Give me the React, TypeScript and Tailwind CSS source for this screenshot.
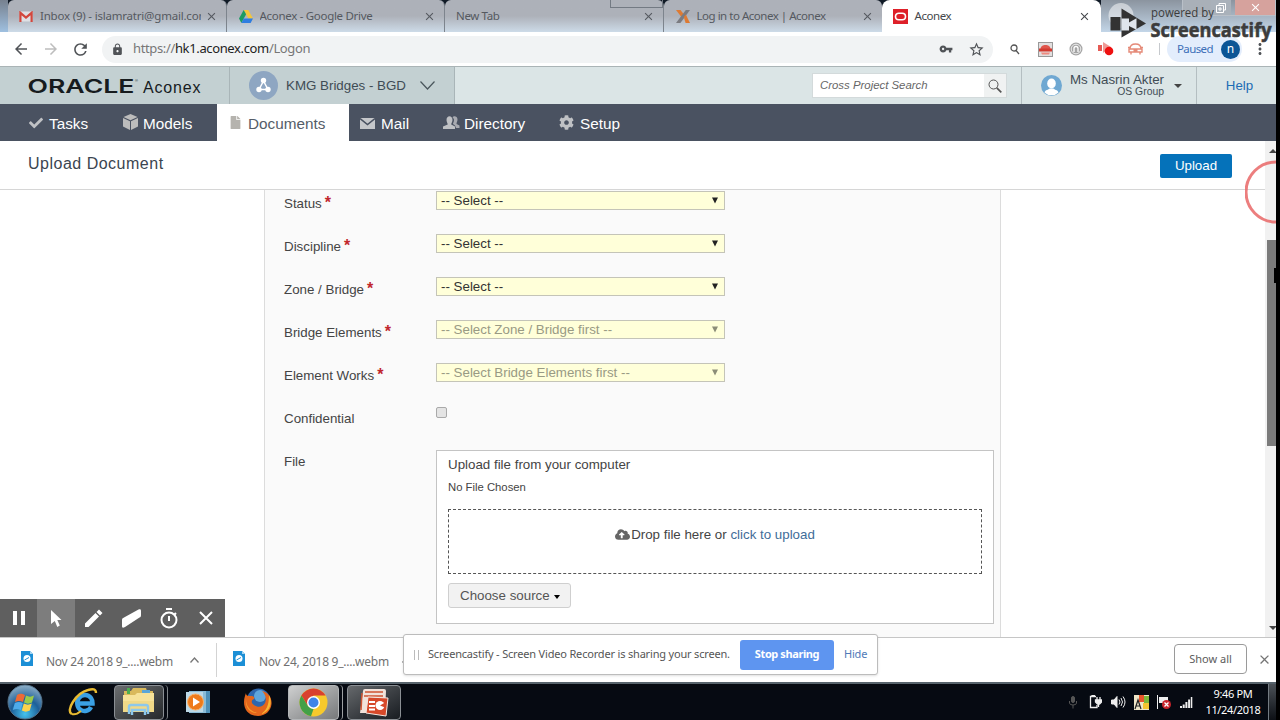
import React from "react"
import { FaCheck, FaCog, FaFile, FaCloudUploadAlt } from "react-icons/fa"
import {
  MdArrowBack,
  MdArrowForward,
  MdClose,
  MdLock,
  MdMoreVert,
  MdRefresh,
  MdStarBorder,
  MdVpnKey,
} from "react-icons/md"

const GmailIcon = () => (
  <svg width="14" height="11" viewBox="0 0 14 11">
    <path d="M0.5 0.5h13v10h-13z" fill="#dfe0e4" />
    <path d="M1.4 11V1.8L7 6.6l5.6-4.8V11" fill="none" stroke="#d2473d" strokeWidth="2.2" />
  </svg>
)

const DriveIcon = () => (
  <svg width="14" height="13" viewBox="0 0 14 13">
    <path d="M4.7 0h4.6L14 8.4H9.4z" fill="#f4c63d" />
    <path d="M4.7 0l2.4 4.2L2.4 13 0 8.4z" fill="#1d9b62" />
    <path d="M4.7 8.4H14L11.6 13H2.4z" fill="#2f7de0" />
  </svg>
)

const AconexIcon = () => (
  <svg width="14" height="13" viewBox="0 0 14 13">
    <path d="M0 0h4.5L8 4.6 5.8 7.6z" fill="#dd7a33" />
    <path d="M9.8 0H14L4.4 13H0z" fill="#7b7b80" />
    <path d="M7.8 7l2-2.6L14 13H9.6z" fill="#dd7a33" />
  </svg>
)

const OracleIcon = () => (
  <svg width="15" height="15" viewBox="0 0 15 15">
    <path d="M0 0h15v15H0z" fill="#de2029" />
    <rect x="2.5" y="4.2" width="10" height="6.6" rx="3.3" fill="none" stroke="#fff" strokeWidth="1.6" />
  </svg>
)

const tabs = [
  { title: "Inbox (9) - islamratri@gmail.com", icon: <GmailIcon />, pad: "pl-[11px]", tracking: "tracking-[-0.2px]" },
  { title: "Aconex - Google Drive", icon: <DriveIcon />, pad: "pl-[12px]", tracking: "tracking-[-0.3px]" },
  { title: "New Tab", icon: null, pad: "pl-[11px]", tracking: "tracking-[-0.35px]" },
  { title: "Log in to Aconex | Aconex", icon: <AconexIcon />, pad: "pl-[12px]", tracking: "tracking-[-0.48px]" },
]

const TabStrip = () => (
  <div className="flex h-8 shrink-0 bg-[#101a26] font-['Noto_Sans','Open_Sans',sans-serif] text-[11.5px] text-[#555960]">
    <div className="w-2 bg-linear-to-b from-[#77818f] to-[#9fc0e0]" />
    {tabs.map((tab, i) => (
      <div
        key={i}
        className={`flex items-center border-r border-[#7d848d] rounded-t-md bg-linear-to-b from-[#adb1b9] from-50% to-[#cddbe8] pr-2 ${tab.pad} ${i === 3 ? "w-[218px] border-r-0" : "w-[218.5px]"}`}
      >
        {tab.icon && <div className="mr-[7px]">{tab.icon}</div>}
        <div className={`flex-1 overflow-hidden whitespace-nowrap ${tab.tracking}`}>{tab.title}</div>
        <MdClose className="ml-1 shrink-0" size={13} />
      </div>
    ))}
    <div className="flex w-[219px] items-center rounded-t-lg bg-white pl-[11px] pr-[10px] text-[#45484c]">
      <OracleIcon />
      <div className="ml-[7px] flex-1 tracking-[-0.45px]">Aconex</div>
      <MdClose size={13} />
    </div>
    <div className="flex flex-1 items-start justify-end bg-linear-to-b from-[#8b949f] to-[#c3d6e8]">
      <div className="flex h-[16px] w-[94px] overflow-hidden rounded-bl border border-t-0 border-[#b9c0c8] text-white">
        <div className="w-[32px] border-r border-[#c3c9cf] bg-[#a9b0b8]" />
        <div className="flex w-[20px] items-start justify-center bg-[#a9b1ba] pt-[3px] -ml-[4px] mr-[4px]">
          <svg width="10" height="10" viewBox="0 0 10 10" fill="none" stroke="#fff">
            <path d="M3 2.5v-2h6.500v6.500h-2M.5 2.500h7v7h-7zM3 5h2v2H3z" />
          </svg>
        </div>
        <div className="flex flex-1 items-center justify-center bg-[#d6a29d]">
          <MdClose size={13} stroke="#fff" />
        </div>
      </div>
    </div>
  </div>
)

const Toolbar = () => (
  <div className="flex h-[34px] shrink-0 items-center bg-white font-['Noto_Sans','Open_Sans',sans-serif] text-[#505357]">
    <MdArrowBack className="ml-3" size={18} />
    <MdArrowForward className="ml-[12px] text-[#bdbdbd]" size={18} />
    <MdRefresh className="ml-[11px]" size={19} />
    <div className="ml-3 flex h-[27px] w-[891px] items-center rounded-full bg-[#f1f3f4] pl-[9px] pr-[8px]">
      <MdLock size={13} />
      <div className="ml-[9px] flex-1 text-[13px] tracking-[-0.36px] text-[#777]">
        https://<span className="text-[#222]">hk1.aconex.com</span>/Logon
      </div>
      <MdVpnKey size={14} />
      <MdStarBorder className="ml-[15px]" size={17} />
    </div>
    <svg className="ml-[17px]" width="10" height="11" viewBox="0 0 10 11" fill="none" stroke="#555" strokeWidth="1.3">
      <circle cx="4" cy="4" r="3" />
      <path d="M6 6.5l3 3.5" />
    </svg>
    <div className="ml-[18px] flex h-[15px] w-[15px] items-center justify-center border border-[#999] bg-[#e2dfdf]">
      <svg width="13" height="11" viewBox="0 0 13 11">
        <path d="M1.500 5c0-5.500 10-5.500 10 0z" fill="#e0564c" />
        <path d="M0 4.500h13v3H0z" fill="#d23a30" />
        <path d="M2 8.500h9l-1 2H3z" fill="#ef8b80" />
      </svg>
    </div>
    <svg className="ml-[16px]" width="14" height="14" viewBox="0 0 14 14">
      <circle cx="7" cy="7" r="6.5" fill="#a5a5a5" />
      <circle cx="7" cy="7" r="4.8" fill="none" stroke="#eee" />
      <path d="M5 10V6.5a2 2 0 0 1 4 0V10" fill="none" stroke="#fff" strokeWidth="1.3" />
    </svg>
    <svg className="ml-[15px]" width="17" height="14" viewBox="0 0 17 14">
      <path d="M0 3h4v6H0z" fill="#e65a54" />
      <path d="M5 0l8 5-8 6z" fill="#ef9a96" />
      <circle cx="11" cy="9" r="4.3" fill="#ee1010" />
    </svg>
    <svg className="ml-[13px]" width="15" height="12" viewBox="0 0 15 12" fill="none" stroke="#e58a78" strokeWidth="1.4">
      <path d="M2 6c0-3.500 2-5 5.500-5S13 2.500 13 6M1 6h13v3H1zM3 11.500V9.500M12 11.500V9.500M5.500 7.500h4" />
      <path d="M0 4.500h2M13 4.500h2" />
    </svg>
    <div className="ml-4 h-3 w-px bg-[#c6c9cd]" />
    <div className="ml-[7px] flex h-[26px] w-[75px] items-center justify-between rounded-full bg-[#e3edfc] pl-[10px] pr-[2px] text-[11.5px] text-[#3d6fb8]">
      <span className="tracking-[-0.6px]">Paused</span>
      <div className="flex h-[19px] w-[19px] items-center justify-center rounded-full bg-[#0b5596] pb-px text-[12px] text-white">
        n
      </div>
    </div>
    <MdMoreVert className="ml-[9px] shrink-0" size={18} />
  </div>
)

const Watermark = () => (
  <svg className="absolute left-[1106px] top-0" width="169" height="48" viewBox="0 0 169 48">
    <circle cx="15" cy="15.500" r="12.500" fill="#ffffff" opacity="0.5" />
    <path d="M4.500 17h10v13.500h-10z" fill="#333" />
    <path d="M15.500 8.500l24.500 15-24.500 14z" fill="#333" />
    <path d="M15.500 18.500h7.500v4l7.500-4.200v11.500L23 26v4.500h-7.500z" fill="#dfe5ec" />
    <g fontFamily="'Open Sans', sans-serif" fill="#3c3c3c">
      <text x="45" y="17" fontSize="13" textLength="63" lengthAdjust="spacingAndGlyphs">
        powered by
      </text>
      <text x="44.500" y="37" fontSize="20" fontWeight="700" stroke="#3c3c3c" strokeWidth="0.6" textLength="121" lengthAdjust="spacingAndGlyphs">
        Screencastify
      </text>
    </g>
  </svg>
)

const AppHeader = () => (
  <div className="flex h-[38px] shrink-0 border-t border-[#aab4b6] bg-[#dbe5e6] text-[#3f4c55]">
    <div className="flex w-[230px] border-r border-[#a9b5b8] bg-[#c3d0d2] pl-7">
      <svg width="180" height="37" viewBox="0 0 180 37" fontFamily="Liberation Sans, sans-serif" fill="#161b1e">
        <text x="-.5" y="25.500" fontSize="18.500" fontFamily="Inter, sans-serif" fontWeight="600" textLength="107" lengthAdjust="spacingAndGlyphs">
          ORACLE
        </text>
        <text x="107" y="15" fontSize="4">®</text>
        <text x="115" y="26" fontSize="16" textLength="57.500" lengthAdjust="spacing">
          Aconex
        </text>
      </svg>
    </div>
    <div className="flex w-[225px] items-center border-r border-[#a9b5b8] bg-[#c3d0d2] pl-[19px]">
      <svg width="29" height="29" viewBox="0 0 29 29">
        <circle cx="14.500" cy="14.500" r="14.500" fill="#8ea6c2" />
        <path d="M14.500 10l-4.500 8.500h9z" fill="none" stroke="#fff" strokeWidth="1.500" />
        <g fill="#fff">
          <circle cx="14.500" cy="9.500" r="2.700" />
          <circle cx="10" cy="18.500" r="2.700" />
          <circle cx="19" cy="18.500" r="2.700" />
        </g>
      </svg>
      <div className="ml-2 w-[120px] whitespace-nowrap text-[13.33px]">KMG Bridges - BGD</div>
      <svg className="ml-[14px]" width="15" height="9" viewBox="0 0 15 9" fill="none" stroke="#4a565c" strokeWidth="1.2">
        <path d="M.5 .5l7 7.500 7-7.500" />
      </svg>
    </div>
    <div className="flex flex-1 items-center justify-end pr-[14px]">
      <div className="flex h-[25px] w-[195px] items-center border border-[#d3dadb] bg-white pl-[7px] text-[11.4px] italic text-[#666]">
        <div className="flex-1">Cross Project Search</div>
        <div className="flex h-full w-[22px] items-center justify-center bg-[#f0f2f2]">
          <svg width="14" height="14" viewBox="0 0 14 14" fill="none" stroke="#555">
            <circle cx="5.500" cy="5.500" r="4.500" />
            <path d="M8.800 8.800l4.500 4.500" strokeWidth="1.700" />
          </svg>
        </div>
      </div>
    </div>
    <div className="flex w-[176px] items-center border-x border-[#b4bec1] pl-[19px]">
      <svg width="21" height="21" viewBox="0 0 21 21">
        <circle cx="10.500" cy="10.500" r="10.500" fill="#6fa8d2" />
        <ellipse cx="10.500" cy="8.500" rx="4.300" ry="5" fill="#fff" />
        <path d="M3.500 17.500c1-3 4-2.500 5-4h4c1 1.500 4 1 5 4a10 10 0 0 1-14 0z" fill="#fff" />
      </svg>
      <div className="ml-[7px] w-[95px] text-right leading-none">
        <div className="whitespace-nowrap text-[13.33px]">Ms Nasrin Akter</div>
        <div className="mt-px text-[10.4px]">OS Group</div>
      </div>
      <div className="ml-[10px] mt-px border-x-[4px] border-t-[4px] border-x-transparent border-t-[#444]" />
    </div>
    <div className="flex w-[79px] items-center justify-center pl-[6px] text-[13.33px] text-[#1d6cb5]">Help</div>
  </div>
)

const CubeIcon = () => (
  <svg width="15" height="16" viewBox="0 0 15 16" fill="#bcbcbc">
    <path d="M7.500 0L14.500 3 7.500 6.200.5 3zM0 4l7 3.200V16L0 12.600zM15 4L8 7.200V16l7-3.400z" />
  </svg>
)

const MailIcon = () => (
  <svg width="15" height="11" viewBox="0 0 15 11">
    <path d="M0 0h15v11H0z" fill="#c5c7ca" />
    <path d="M0 .5l7.500 6L15 .5" fill="none" stroke="#4a5261" strokeWidth="1.500" />
  </svg>
)

const DirectoryIcon = () => (
  <svg width="17" height="13" viewBox="0 0 17 13" fill="#bfc1c4">
    <path d="M9.500 1.500C10.500-.5 14.500 0 14.500 3.500c0 2-1 2.500-1 4.500l3 1.500V12h-3.500l-1-2.500-2-1.500c0-1.500 1-2 1-4 0-1-.5-1.800-1.500-2.500z" opacity=".8" />
    <path d="M3.500 4C3.500-1 9.500-1 9.500 4c0 2-1.300 3-1.300 4.500L12 10.500V13H0v-2.500l4.700-2C4.700 7 3.500 6 3.500 4z" />
  </svg>
)

const NavBar = () => (
  <div className="flex h-[37px] shrink-0 items-center bg-[#4a5261] text-[15.3px] leading-[20px] text-white">
    <div className="flex w-[93px] items-center pl-[29px] pt-[3px]">
      <FaCheck className="mb-[2px] mr-[6px] text-[#c0c2c5]" size={14} />
      Tasks
    </div>
    <div className="flex w-[124px] items-center pl-[30px] pt-[3px]">
      <div className="mb-[4px] mr-[5px]"><CubeIcon /></div>
      Models
    </div>
    <div className="flex h-full w-[132px] items-center bg-white pl-[12px] pt-[3px] text-[#555d68]">
      <FaFile className="mb-[3px] mr-[6px] text-[#b5b3ae]" size={13} />
      Documents
    </div>
    <div className="flex w-[94px] items-center pl-[11px] pt-[3px]">
      <div className="mb-[2px] mr-[6px]"><MailIcon /></div>
      Mail
    </div>
    <div className="flex w-[116px] items-center pt-[3px]">
      <div className="mb-[4px] mr-1"><DirectoryIcon /></div>
      Directory
    </div>
    <div className="flex items-center pt-[3px]">
      <FaCog className="mb-[3px] mr-[6px] text-[#bfc1c4]" size={15} />
      Setup
    </div>
  </div>
)

const fields = [
  { label: "Status", value: "-- Select --", disabled: false },
  { label: "Discipline", value: "-- Select --", disabled: false },
  { label: "Zone / Bridge", value: "-- Select --", disabled: false },
  { label: "Bridge Elements", value: "-- Select Zone / Bridge first --", disabled: true },
  { label: "Element Works", value: "-- Select Bridge Elements first --", disabled: true },
]

const FieldRow = ({ label, value, disabled }: { label: string; value: string; disabled: boolean }) => (
  <div className="flex h-[43px] items-start">
    <div className="flex w-[152px] pt-[3px] leading-[20px]">
      {label}
      <span className="-mt-px ml-[3px] text-[16px] font-bold text-[#c1272d]">*</span>
    </div>
    <div
      className={`flex h-[19px] w-[289px] items-center justify-between border border-[#c4c4b8] bg-[#ffffd9] pl-1 pr-[6px] ${disabled ? "text-[#999a84]" : "text-[#333]"}`}
    >
      {value}
      <svg width="6" height="7" viewBox="0 0 6 7" fill={disabled ? "#8c8d78" : "#222"}>
        <path d="M0 .5h6L3 6.500z" />
      </svg>
    </div>
  </div>
)

const UploadForm = () => (
  <div className="ml-[264px] h-full w-[737px] border-x border-[#dcdcdc] bg-[#fafafa] pl-[19px] pt-px text-[13.33px] text-[#444]">
    {fields.map((f) => (
      <FieldRow key={f.label} {...f} />
    ))}
    <div className="flex h-[43px] items-start">
      <div className="w-[152px] pt-[3px] leading-[20px]">Confidential</div>
      <div className="mt-px h-[11px] w-[11px] rounded-[2px] border border-[#a9a9a9] bg-[#e4e4e4]" />
    </div>
    <div className="flex items-start">
      <div className="w-[152px] pt-[3px] leading-[20px]">File</div>
      <div className="mt-px h-[174px] w-[558px] border border-[#c4c4c4] bg-white px-[11px]">
        <div className="mt-[4px] leading-[20px]">Upload file from your computer</div>
        <div className="mt-[4px] text-[11.3px] leading-[16px]">No File Chosen</div>
        <div className="mt-[14px] flex h-[65px] items-center justify-center border border-dashed border-[#555] pb-[14px]">
          <FaCloudUploadAlt className="mr-px text-[#666]" size={15} />
          Drop file here or&nbsp;<span className="text-[#3f6d99]">click to upload</span>
        </div>
        <div className="mt-[9px] flex h-[25px] w-[123px] items-center rounded-[3px] border border-[#cfcfcf] bg-[#f2f2f2] pl-[11px] text-[#555]">
          Choose source
          <span className="ml-[4px] mt-[2px] border-x-[3.5px] border-t-[4px] border-x-transparent border-t-black" />
        </div>
      </div>
    </div>
  </div>
)

const Page = () => (
  <div className="relative flex h-[496px] shrink-0 bg-white">
    <div className="flex min-w-0 flex-1 flex-col">
      <div className="flex h-[49px] shrink-0 items-start justify-between border-b border-[#d6d6d6] pl-7 pr-[33px] pt-[13px]">
        <div className="text-[16px] leading-[20px] tracking-[0.5px] text-[#3b4550]">Upload Document</div>
        <div className="flex h-6 w-[72px] items-center justify-center rounded-[2px] bg-[#0572ba] text-[13.33px] text-white">
          Upload
        </div>
      </div>
      <div className="min-h-0 flex-1 overflow-hidden">
        <UploadForm />
      </div>
    </div>
    <div className="flex w-[11px] flex-col items-end overflow-hidden bg-[#f1f1f1]">
      <div className="-mr-px mt-[8px] border-x-[4px] border-b-[4px] border-x-transparent border-b-[#444]" />
      <div className="mt-[87px] h-[206px] w-[9px] bg-[#7b7b7b] pl-[7px] pt-7">
        <div className="h-[15px] bg-black" />
      </div>
      <div className="-mr-px mb-[7px] mt-auto border-x-[4px] border-t-[4px] border-x-transparent border-t-[#444]" />
    </div>
    {/* click highlight around the cursor */}
    <svg className="absolute right-0 top-[19px]" width="31" height="65" viewBox="0 0 31 65">
      <circle cx="31" cy="32" r="30" fill="none" stroke="#e96767" strokeOpacity=".85" strokeWidth="3" />
    </svg>
  </div>
)

const RecorderBar = () => (
  <div className="absolute left-0 top-[599px] flex h-[38px] w-[225px] items-center bg-[#5f5f5f] text-white">
    <div className="flex w-[37px] justify-center">
      <svg width="12" height="14" viewBox="0 0 12 14" fill="#fff">
        <path d="M0 0h4v14H0zM8 0h4v14H8z" />
      </svg>
    </div>
    <div className="flex h-full w-[38px] items-center justify-center bg-[#7d7d7d]">
      <svg width="12" height="17" viewBox="0 0 12 17" fill="#fff">
        <path d="M1 0l10.500 10H7.300l2.500 5.500L7.300 17 4.800 11 1 14z" />
      </svg>
    </div>
    <div className="flex w-[37px] justify-center">
      <svg width="18" height="18" viewBox="0 0 18 18" fill="#fff">
        <path d="M0 14.500L10.500 4l3.500 3.500L3.500 18H0zM11.500 3L14 .5 17.500 4 15 6.500z" />
      </svg>
    </div>
    <div className="flex w-[38px] justify-center">
      <svg width="19" height="19" viewBox="0 0 19 19" fill="#fff">
        <path d="M0 11c0-2 1-2 2-2.600L16.500.5C18 0 19 0 19 2v4c0 1.500-.5 2-1.500 2.600L3 18c-2 1-3 1-3-1z" />
      </svg>
    </div>
    <div className="flex w-[37px] justify-center">
      <svg width="18" height="21" viewBox="0 0 18 21" fill="none" stroke="#fff" strokeWidth="2">
        <path d="M6 1h6" />
        <circle cx="9" cy="12" r="7.500" />
        <path d="M9 8v5M14.500 5l1.500 1.500" />
      </svg>
    </div>
    <div className="flex w-[38px] justify-center">
      <svg width="14" height="14" viewBox="0 0 14 14" stroke="#fff" strokeWidth="2">
        <path d="M1 1l12 12M13 1L1 13" />
      </svg>
    </div>
  </div>
)

const WebmIcon = () => (
  <svg className="mb-[3px]" width="12" height="15" viewBox="0 0 12 15">
    <path d="M0 0h9l3 3v12H0z" fill="#1c8fd6" />
    <path d="M9 0v3h3z" fill="#a8d6f2" />
    <circle cx="6" cy="7.500" r="3.500" fill="#fff" />
    <path d="M3.500 9L8 6.500" stroke="#1c8fd6" />
  </svg>
)

const Chevron = ({ className = "" }: { className?: string }) => (
  <svg className={className} width="9" height="6" viewBox="0 0 9 6" fill="none" stroke="#777" strokeWidth="1.3">
    <path d="M.5 5.500l4-4.500 4 4.500" />
  </svg>
)

const DownloadShelf = () => (
  <div className="flex h-[45px] shrink-0 items-center border-t border-[#c6c6c6] bg-white font-['Noto_Sans','Open_Sans',sans-serif] text-[12px] text-[#707070]">
    <div className="flex h-[34px] w-[217px] items-center border-r border-[#d3d3d3] pl-[21px]">
      <WebmIcon />
      <div className="ml-[13px] mt-[4px] w-[128px] whitespace-nowrap tracking-[-0.26px]">Nov 24 2018 9_....webm</div>
      <Chevron className="ml-4" />
    </div>
    <div className="flex flex-1 items-center pl-4">
      <WebmIcon />
      <div className="ml-[14px] mt-[4px] w-[130px] whitespace-nowrap tracking-[-0.26px]">Nov 24, 2018 9_....webm</div>
      <Chevron className="ml-[13px]" />
    </div>
    <div className="mb-[2px] mr-[10px] flex h-[30px] w-[73px] items-center justify-center rounded border border-[#9a9a9a] text-[11px] text-[#5c5c5c]">
      Show all
    </div>
    <MdClose className="mb-[2px] mr-[4px] text-[#757575]" size={15} />
  </div>
)

const SharingBar = () => (
  <div className="absolute left-[403px] top-[634px] flex h-[41px] w-[475px] items-center rounded-[3px] border border-[#bcbcbc] bg-white font-['Noto_Sans','Open_Sans',sans-serif] text-[11px] text-[#555] shadow">
    <div className="ml-[10px] h-[10px] w-[5px] border-x border-[#bbb]" />
    <div className="ml-[9px] w-[312px] whitespace-nowrap tracking-[-0.18px]">Screencastify - Screen Video Recorder is sharing your screen.</div>
    <div className="flex h-[30px] w-[94px] items-center justify-center rounded-[3px] bg-[#5e95f0] font-bold tracking-[-0.4px] text-white">
      Stop sharing
    </div>
    <div className="ml-[10px] tracking-[-0.2px] text-[#5079b8]">Hide</div>
  </div>
)

const StartOrb = () => (
  <svg width="36" height="36" viewBox="0 0 36 36">
    <defs>
      <radialGradient id="orb" cx=".5" cy=".85" r=".85">
        <stop offset="0" stopColor="#45c3ee" />
        <stop offset=".5" stopColor="#1d5f98" />
        <stop offset="1" stopColor="#8fb0c8" />
      </radialGradient>
    </defs>
    <circle cx="18" cy="18" r="17" fill="url(#orb)" stroke="#54748c" />
    <path d="M10 11c3-2 5-1.500 8 0l-2 7c-3-1.500-5-1.500-8 0z" fill="#ee6a35" />
    <path d="M19 11.500c3 1.500 5 1.500 8 0l-2 7c-3 1.500-5 1.500-8 0z" fill="#9bcb4a" />
    <path d="M7.800 19c3-1.500 5-1.500 8 0l-2 7c-3-1.500-5-1.500-8 0z" fill="#4eabea" />
    <path d="M16.800 19.500c3 1.500 5 1.500 8 0l-2 7c-3 1.500-5 1.500-8 0z" fill="#fbd24c" />
  </svg>
)

const ExplorerBrowserIcon = () => (
  <svg width="32" height="30" viewBox="0 0 32 30">
    <path d="M24 20c-2 4-7 5-10 3-4-2-5-8-2-12s9-4 12 0c1.500 2 1.500 4 1.500 5.500H11" fill="none" stroke="#3aa0e4" strokeWidth="4.5" />
    <path d="M5 27C-2 24 9 6 21 3c5-1.500 8-1 8 3" fill="none" stroke="#e8bb32" strokeWidth="2.4" />
    <path d="M5 27c3 1 6-.5 9-3" fill="none" stroke="#e8bb32" strokeWidth="2" />
  </svg>
)

const FolderIcon = () => (
  <svg width="32" height="30" viewBox="0 0 32 30">
    <path d="M1 4h7l2-3h13l1 3h6v20H1z" fill="#d9b95c" />
    <path d="M4 1h3v6H4z" fill="#4cae4f" />
    <path d="M19 3h8v5h-8z" fill="#5aa6d8" />
    <path d="M0 8h12l2-2h17v19H0z" fill="#f6e299" />
    <path d="M0 14h31v11H0z" fill="#f0d988" />
    <path d="M6 27v-7q0-2 2-2h15q2 0 2 2v7M9 28v-5h13v5" fill="none" stroke="#8cc8ec" strokeWidth="2.4" />
  </svg>
)

const MediaIcon = () => (
  <svg width="25" height="24" viewBox="0 0 25 24">
    <path d="M7 1h17v22H7z" fill="#4e90b8" />
    <path d="M3 1h17v22H3z" fill="#8abcd8" />
    <path d="M0 2h17v20H0z" fill="#bcd8e6" />
    <circle cx="9.500" cy="12" r="8" fill="#ee7b1c" stroke="#f9b26a" />
    <path d="M7 7.500l7 4.500-7 4.500z" fill="#fff" />
  </svg>
)

const FirefoxIcon = () => (
  <svg width="30" height="30" viewBox="0 0 30 30">
    <circle cx="15.500" cy="13" r="11.500" fill="#2d66ad" />
    <circle cx="17" cy="9" r="6" fill="#5fa6dc" />
    <path d="M3 6c0 3 2 3 5 3 2 0 4 1 3 3-3 1-3 4 0 6 4 3 9 2 11-2 2-5 0-9-3-12 7 2 10 7 9.500 13C28 24 22 29 15 29 6 29 1 23 1 15c0-4 1-6 2-9z" fill="#e3661c" />
    <path d="M26 8c4 8 1 17-8 19 5-3 8-8 8-19z" fill="#f8b632" />
    <path d="M3 12c0 7 4 12 11 14-7 0-12-5-11-14z" fill="#f79a2c" />
  </svg>
)

const ChromeIcon = () => (
  <svg width="29" height="29" viewBox="0 0 29 29">
    <circle cx="14.500" cy="14.500" r="14" fill="#f7c92c" />
    <path d="M2.400 7.500A14 14 0 0 1 26.600 7.500H14.500L9 18z" fill="#d9402f" />
    <path d="M2.400 7.500L9 18l5.500 3-2.500 7.300A14 14 0 0 1 2.400 7.500z" fill="#43a047" />
    <circle cx="14.500" cy="14.500" r="6.500" fill="#fff" />
    <circle cx="14.500" cy="14.500" r="5" fill="#3f83e8" />
  </svg>
)

const PowerPointIcon = () => (
  <svg width="31" height="29" viewBox="0 0 31 29">
    <path d="M6 1h19q2 0 2 2l-1 22H1L4 3q0-2 2-2z" fill="#f1e2da" />
    <path d="M6 4h18M5 8h19" stroke="#cf5432" strokeWidth="1.5" />
    <path d="M3 5L2 22" stroke="#cf5432" strokeWidth="1.5" />
    <path d="M9 9l20 1-2 18-20-3z" fill="#d6492a" stroke="#f5e9e3" />
    <path d="M10 14h6M10 18h6M10 21.500h6" stroke="#fff" strokeWidth="1.8" />
    <circle cx="21" cy="17.500" r="4.500" fill="#fff" />
    <path d="M21 17.500l5-3v5z" fill="#d6492a" />
  </svg>
)

const Tray = () => (
  <div className="flex items-center">
    <svg width="8" height="13" viewBox="0 0 8 13" fill="none" stroke="#555">
      <rect x="2.500" y=".5" width="3" height="6" rx="1.500" fill="#555" />
      <path d="M.5 5v2q0 2 3.500 2t3.500-2V5M4 9v3.500" />
    </svg>
    <svg className="ml-[12px]" width="13" height="14" viewBox="0 0 13 14" fill="none" stroke="#eee" strokeWidth="1.3">
      <path d="M7 1.500H1.500v11H8V10M3 1.500V0h3" />
      <path d="M8 2v3M11 2v3M6.500 5h6v2l-2 2h-2l-2-2zM9.500 9v3" fill="#eee" />
    </svg>
    <svg className="ml-[9px]" width="15" height="14" viewBox="0 0 15 14" fill="none" stroke="#eee">
      <path d="M.5 5h2.500l3-3.500v11L3 9H.5z" fill="#eee" />
      <path d="M8 4.500q2 2.500 0 5M10 3q3 4 0 8M12 1.500q4 5.500 0 11" />
    </svg>
    <svg className="ml-[8px]" width="15" height="15" viewBox="0 0 15 15">
      <path d="M0 0h15v15H0z" fill="#eee6c8" />
      <path d="M5 0h5v7H5z" fill="#e8562b" />
      <path d="M10 1h5v7h-5z" fill="#7eb83a" />
      <path d="M9 8h6v6H9z" fill="#f4c430" />
      <path d="M1 14l3-9 3 9M2 11h4" fill="none" stroke="#222" strokeWidth="1.2" />
    </svg>
    <svg className="ml-[8px]" width="14" height="15" viewBox="0 0 14 15">
      <path d="M.5 0v14" stroke="#eee" />
      <path d="M2 2h9v6H2z" fill="#eee" />
      <circle cx="9.500" cy="9.500" r="4.500" fill="#c9242b" />
      <path d="M7.500 7.500l4 4M11.500 7.500l-4 4" stroke="#fff" strokeWidth="1.3" />
    </svg>
    <svg className="ml-[9px]" width="13" height="11" viewBox="0 0 13 11" fill="#eee">
      <path d="M0 9h2v2H0zM2.700 7.500h2V11h-2zM5.400 5h2v6h-2zM8.100 2.500h2V11h-2zM10.800 0h1.500v11h-1.500z" />
    </svg>
  </div>
)

const Taskbar = () => (
  <div className="flex h-[38px] shrink-0 items-center border-t-2 border-[#57636c] bg-[#060a12]">
    <div className="ml-[7px]"><StartOrb /></div>
    <div className="ml-[24px]"><ExplorerBrowserIcon /></div>
    <div className="ml-[15px] flex h-[35px] w-[50px] items-center justify-center rounded-sm border border-[#8a8f94] bg-linear-to-br from-[#6b6e70] to-[#26292c]">
      <FolderIcon />
    </div>
    <div className="h-[35px] w-[4px] rounded-r border-r border-[#7e8387]" />
    <div className="ml-[18px]"><MediaIcon /></div>
    <div className="ml-[32px]"><FirefoxIcon /></div>
    <div className="ml-[15px] flex h-[35px] w-[51px] items-center justify-center rounded-sm border border-[#b3b6b8] bg-linear-to-br from-[#cfd0d0] to-[#77797b]">
      <ChromeIcon />
    </div>
    <div className="h-[35px] w-[4px] rounded-r border-r border-[#9da0a3]" />
    <div className="ml-[4px] flex h-[35px] w-[54px] items-center justify-center rounded-sm border border-[#8a8f94] bg-linear-to-br from-[#66696c] to-[#191d22]">
      <PowerPointIcon />
    </div>
    <div className="ml-auto"><Tray /></div>
    <div className="ml-[11px] w-[58px] text-center font-['Noto_Sans','Open_Sans',sans-serif] text-[11px] leading-[16px] tracking-[-0.35px] text-white">
      <div>9:46 PM</div>
      <div>11/24/2018</div>
    </div>
    <div className="ml-[6px] h-full w-[8px] border-l border-[#747b82] bg-linear-to-b from-[#4c5258] to-[#0d1015]" />
  </div>
)

export default function App() {
  return (
    <div className="relative flex h-[720px] w-[1280px] flex-col overflow-hidden bg-black pr-1 font-['Liberation_Sans',Arial,sans-serif]">
      <TabStrip />
      <Toolbar />
      <AppHeader />
      <NavBar />
      <Page />
      <DownloadShelf />
      <Taskbar />
      <div className="absolute left-[610px] top-0 h-[8px] w-[53px] border border-t-0 border-[#737a83]" />
      <Watermark />
      <RecorderBar />
      <SharingBar />
    </div>
  )
}
